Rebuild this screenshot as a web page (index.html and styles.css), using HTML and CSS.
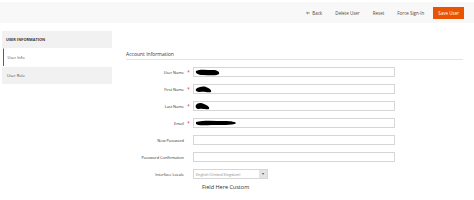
FILE: index.html
```html
<!DOCTYPE html>
<html lang="en">
<head>
    <meta charset="UTF-8">
    <title>Edit User</title>
    <link rel="stylesheet" href="styles.css">
</head>
<body>
    <!-- page actions bar -->
    <div class="page-actions">
        <span class="action action-back">
            <svg width="4" height="4" viewBox="0 0 4 4"><path d="M3.8 2 H0.6 M1.8 0.8 L0.6 2 L1.8 3.2" stroke="#514943" stroke-width="0.6" fill="none"/></svg>
            Back
        </span>
        <span class="action">Delete User</span>
        <span class="action">Reset</span>
        <span class="action">Force Sign-In</span>
        <span class="action action-primary">Save User</span>
    </div>

    <div class="main">
        <!-- left tabs -->
        <div class="sidebar">
            <div class="tabs-title">USER INFORMATION</div>
            <div class="tab tab-active">User Info</div>
            <div class="tab">User Role</div>
        </div>

        <!-- form -->
        <div class="content">
            <div class="legend">Account Information</div>

            <div class="field">
                <label>User Name</label><span class="req">*</span>
                <div class="input">
                    <svg width="26" height="7" viewBox="0 0 26 7"><path d="M1 2 C4 0 12 1 18 1 C22 1 25 3 24 5 C22 7 14 6 8 6 C3 6 0 4 1 2 Z" fill="#000"/></svg>
                </div>
            </div>
            <div class="field">
                <label>First Name</label><span class="req">*</span>
                <div class="input">
                    <svg width="18" height="7" viewBox="0 0 18 7"><path d="M1 3 C3 1 8 0 11 1 C14 2 17 4 16 6 C13 7 9 5 5 6 C2 6 0 5 1 3 Z" fill="#000"/></svg>
                </div>
            </div>
            <div class="field">
                <label>Last Name</label><span class="req">*</span>
                <div class="input">
                    <svg width="16" height="8" viewBox="0 0 16 8"><path d="M1 3 C2 1 6 0 9 2 C12 3 15 5 14 7 C11 8 7 6 4 7 C1 7 0 5 1 3 Z" fill="#000"/></svg>
                </div>
            </div>
            <div class="field">
                <label>Email</label><span class="req">*</span>
                <div class="input">
                    <svg width="42" height="6" viewBox="0 0 42 6"><path d="M1 2 C8 0 20 1 30 1 C36 1 41 2 41 3 C40 5 30 5 20 5 C10 5 3 6 1 4 Z" fill="#000"/></svg>
                </div>
            </div>
            <div class="field">
                <label>New Password</label><span class="req"></span>
                <div class="input"></div>
            </div>
            <div class="field">
                <label>Password Confirmation</label><span class="req"></span>
                <div class="input"></div>
            </div>
            <div class="field">
                <label>Interface Locale</label><span class="req"></span>
                <div class="select">
                    <span class="select-text">English (United Kingdom)</span>
                    <span class="select-arrow">&#9662;</span>
                </div>
            </div>
            <div class="custom">Field Here Custom</div>
        </div>
    </div>
</body>
</html>
```

FILE: styles.css
```css
/* page */
body {
    margin: 0;
    background: #fff;
    font-family: "Open Sans", "Liberation Sans", sans-serif;
    color: #303030;
}
/* top action bar */
.page-actions {
    margin-top: 2px;
    height: 21px;
    background: #f8f8f8;
    display: flex;
    align-items: center;
    justify-content: flex-end;
    gap: 13px;
    padding-right: 10px;
}
.action {
    font-size: 4.5px;
    color: #514943;
    white-space: nowrap;
}
.action-back {
    display: flex;
    align-items: center;
    gap: 2.5px;
}
.action-primary {
    background: #eb5202;
    color: #fff;
    padding: 3px 5px;
    margin-left: -4px;
}
/* layout */
.main {
    display: flex;
    margin-top: 8px;
}
.sidebar {
    width: 110px;
    margin-left: 2px;
    align-self: flex-start;
}
.tabs-title {
    height: 17px;
    line-height: 17px;
    background: #f1f1f1;
    font-size: 3.9px;
    font-weight: 700;
    padding-left: 4px;
    color: #41362f;
}
.tab {
    height: 17px;
    line-height: 17px;
    background: #f1f1f1;
    font-size: 4px;
    padding-left: 5px;
    border-top: 1px solid #fff;
    color: #514943;
}
.tab-active {
    background: #fff;
    border-left: 1.5px solid #e22626;
    margin-left: 1px;
    padding-left: 3.5px;
}
.content {
    margin-left: 14px;
    margin-top: 20px;
    width: 337px;
}
.legend {
    font-size: 5px;
    color: #41362f;
    padding-bottom: 2px;
    border-bottom: 1px solid #e3e3e3;
}
/* form rows */
.field {
    display: grid;
    grid-template-columns: 58px 9px 202px;
    align-items: center;
    height: 10px;
    margin-top: 7px;
}
.field:first-of-type {
    margin-top: 4px;
}
.field label {
    text-align: right;
    font-size: 3.9px;
    line-height: 5px;
    white-space: nowrap;
}
.req {
    color: #e22626;
    font-size: 4.5px;
    line-height: 5px;
    text-align: center;
}
.input {
    height: 8px;
    border: 1px solid #d6d6d6;
    background: #fff;
    display: flex;
    align-items: center;
    padding-left: 1px;
}
.select {
    width: 73px;
    height: 8px;
    border: 1px solid #d6d6d6;
    display: flex;
    align-items: center;
    font-size: 3.8px;
    color: #8a8a8a;
}
.select-text {
    flex: 1;
    padding-left: 2px;
    white-space: nowrap;
}
.select-arrow {
    width: 8px;
    height: 8px;
    line-height: 8px;
    text-align: center;
    background: #e3e3e3;
    color: #555;
    font-size: 4px;
}
.custom {
    margin-top: 4px;
    margin-left: 76px;
    font-size: 5.5px;
    color: #303030;
}
```
